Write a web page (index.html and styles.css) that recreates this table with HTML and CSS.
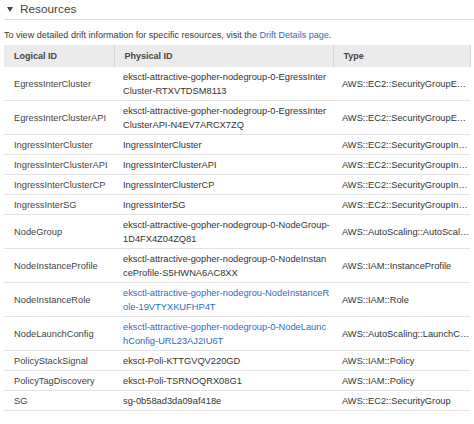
FILE: index.html
```html
<!DOCTYPE html>
<html lang="en">
<head>
<meta charset="utf-8">
<title>Resources</title>
<link rel="stylesheet" href="styles.css">
</head>
<body>
<section class="resources">
  <h2 class="title"><span class="caret"></span>Resources</h2>
  <p class="intro">To view detailed drift information for specific resources, visit the <a href="#" class="link">Drift Details page</a>.</p>
  <table class="grid">
    <colgroup>
      <col class="c-logical">
      <col class="c-physical">
      <col class="c-type">
    </colgroup>
    <thead>
      <tr><th>Logical ID</th><th>Physical ID</th><th>Type</th></tr>
    </thead>
    <tbody>
      <tr><td class="lid">EgressInterCluster</td><td>eksctl-attractive-gopher-nodegroup-0-EgressInter<br>Cluster-RTXVTDSM8113</td><td>AWS::EC2::SecurityGroupE…</td></tr>
      <tr><td class="lid">EgressInterClusterAPI</td><td>eksctl-attractive-gopher-nodegroup-0-EgressInter<br>ClusterAPI-N4EV7ARCX7ZQ</td><td>AWS::EC2::SecurityGroupE…</td></tr>
      <tr><td class="lid">IngressInterCluster</td><td>IngressInterCluster</td><td>AWS::EC2::SecurityGroupIn…</td></tr>
      <tr><td class="lid">IngressInterClusterAPI</td><td>IngressInterClusterAPI</td><td>AWS::EC2::SecurityGroupIn…</td></tr>
      <tr><td class="lid">IngressInterClusterCP</td><td>IngressInterClusterCP</td><td>AWS::EC2::SecurityGroupIn…</td></tr>
      <tr><td class="lid">IngressInterSG</td><td>IngressInterSG</td><td>AWS::EC2::SecurityGroupIn…</td></tr>
      <tr><td class="lid">NodeGroup</td><td>eksctl-attractive-gopher-nodegroup-0-NodeGroup-<br>1D4FX4Z04ZQ81</td><td>AWS::AutoScaling::AutoScal…</td></tr>
      <tr><td class="lid">NodeInstanceProfile</td><td>eksctl-attractive-gopher-nodegroup-0-NodeInstan<br>ceProfile-S5HWNA6AC8XX</td><td>AWS::IAM::InstanceProfile</td></tr>
      <tr><td class="lid">NodeInstanceRole</td><td><a href="#" class="link">eksctl-attractive-gopher-nodegrou-NodeInstanceR<br>ole-19VTYXKUFHP4T</a></td><td>AWS::IAM::Role</td></tr>
      <tr><td class="lid">NodeLaunchConfig</td><td><a href="#" class="link">eksctl-attractive-gopher-nodegroup-0-NodeLaunc<br>hConfig-URL23AJ2IU6T</a></td><td>AWS::AutoScaling::LaunchC…</td></tr>
      <tr><td class="lid">PolicyStackSignal</td><td>eksct-Poli-KTTGVQV220GD</td><td>AWS::IAM::Policy</td></tr>
      <tr><td class="lid">PolicyTagDiscovery</td><td>eksct-Poli-TSRNOQRX08G1</td><td>AWS::IAM::Policy</td></tr>
      <tr><td class="lid">SG</td><td>sg-0b58ad3da09af418e</td><td>AWS::EC2::SecurityGroup</td></tr>
    </tbody>
  </table>
</section>
</body>
</html>
```
FILE: styles.css
```css
html, body {
  margin: 0;
  padding: 0;
  background: #ffffff;
}

body {
  font-family: "Liberation Sans", Arial, Helvetica, sans-serif;
  color: #333333;
}

.resources {
  padding: 0 0 0 4px;
}

.title {
  margin: 0;
  height: 19px;
  border-bottom: 1px solid #dedede;
  font-size: 11.8px;
  font-weight: normal;
  line-height: 19px;
  color: #444444;
  display: flex;
  align-items: center;
}

.caret {
  width: 0;
  height: 0;
  border-left: 3.5px solid transparent;
  border-right: 3.5px solid transparent;
  border-top: 5px solid #444444;
  margin: 0 7px 0 3px;
}

.intro {
  margin: 8px 0 3px;
  font-size: 9.05px;
  line-height: 14px;
  color: #3a3a3a;
}

.link {
  color: #2f6bc0;
  text-decoration: none;
}

.grid {
  width: 466px;
  border-collapse: collapse;
  table-layout: fixed;
  font-size: 9.3px;
}

.c-logical { width: 110px; }
.c-physical { width: 219px; }
.c-type { width: 137px; }

.grid th {
  background: #ebebeb;
  height: 22px;
  padding: 0 10px;
  text-align: left;
  font-weight: bold;
  font-size: 9px;
  color: #444444;
  border-left: 1px solid #d6d6d6;
  border-right: 1px solid #d6d6d6;
}

.grid th:first-child {
  border-left: none;
}

.grid td {
  padding: 3px 6px 2px 9px;
  line-height: 14px;
  border-bottom: 1px solid #e2e2e2;
  vertical-align: middle;
  white-space: nowrap;
  overflow: hidden;
  color: #333333;
}

.grid td.lid {
  padding-left: 10px;
  color: #444444;
}
```
